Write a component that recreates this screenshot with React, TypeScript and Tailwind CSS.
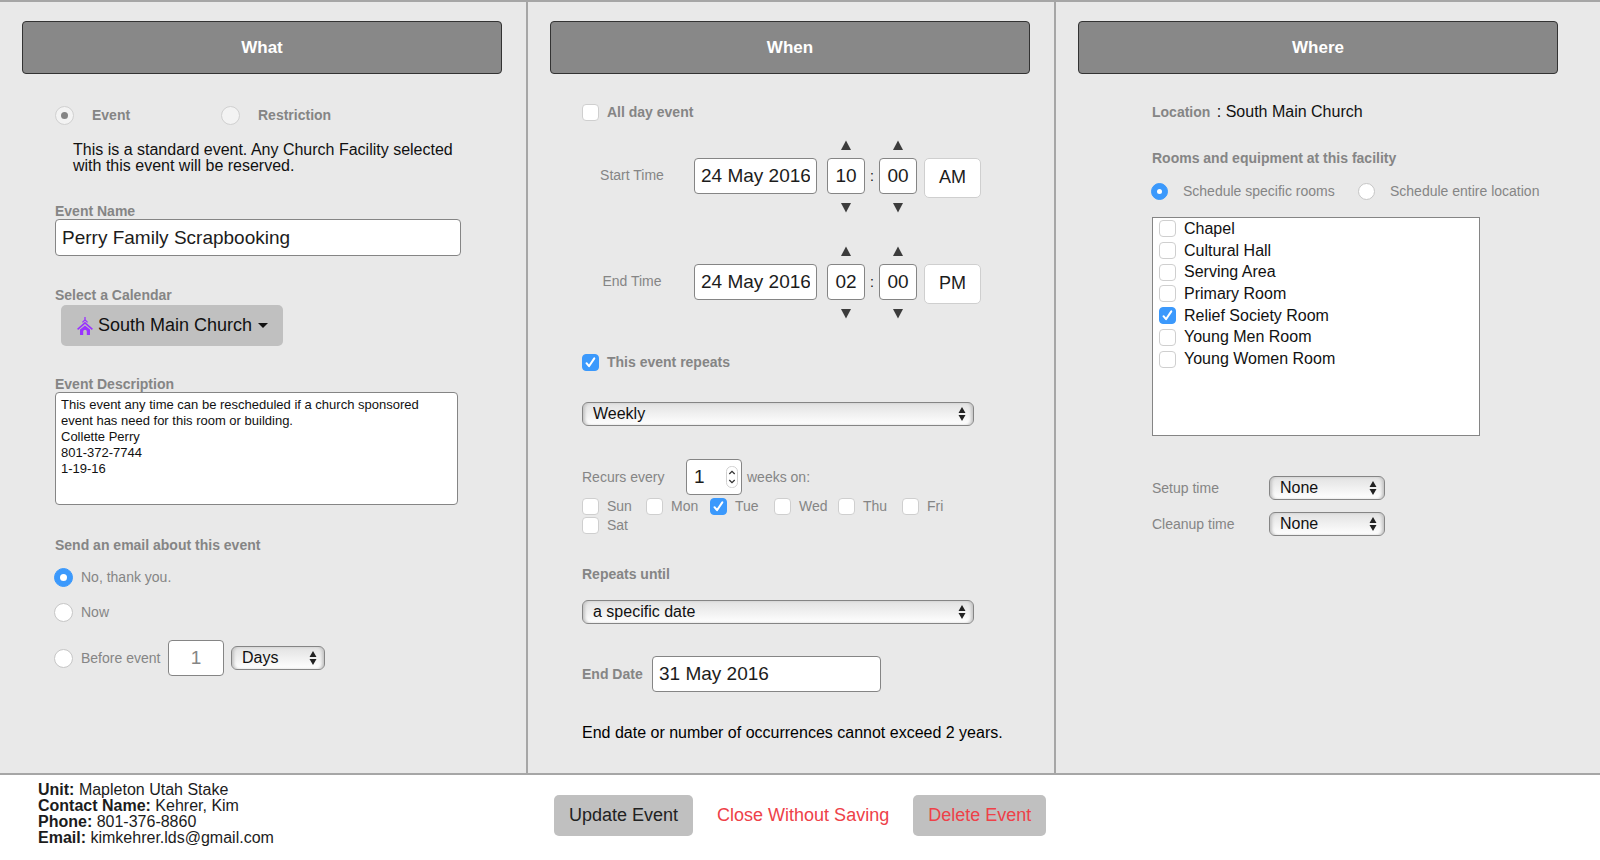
import React, { useState } from "react";

const days = ["Sun", "Mon", "Tue", "Wed", "Thu", "Fri", "Sat"];

const rooms = [
  "Chapel",
  "Cultural Hall",
  "Serving Area",
  "Primary Room",
  "Relief Society Room",
  "Young Men Room",
  "Young Women Room",
];

const contact = [
  ["Unit:", "Mapleton Utah Stake"],
  ["Contact Name:", "Kehrer, Kim"],
  ["Phone:", "801-376-8860"],
  ["Email:", "kimkehrer.lds@gmail.com"],
];

const field =
  "rounded-[4px] border border-[#858585] bg-white text-[19px] leading-6 text-[#1c1c1c] outline-none";

type CheckProps = {
  id: string;
  checked: boolean;
  onChange: () => void;
};

const Check = ({ id, checked, onChange }: CheckProps) => (
  <span className="grid shrink-0">
    <input
      id={id}
      type="checkbox"
      checked={checked}
      onChange={onChange}
      className="col-start-1 row-start-1 size-[17px] appearance-none rounded-[4px] border border-[#cfcfcf] bg-white checked:border-[#3b99fc] checked:bg-[#3b99fc]"
    />
    {checked && (
      <svg
        viewBox="0 0 17 17"
        className="pointer-events-none col-start-1 row-start-1 size-[17px]"
        fill="none"
        stroke="white"
        strokeWidth="2"
        strokeLinecap="round"
        strokeLinejoin="round"
      >
        <path d="M4.5 9.2 7 12.2 12.3 4.4" />
      </svg>
    )}
  </span>
);

type RadioProps = CheckProps & {
  name: string;
  small?: boolean;
  disabled?: boolean;
};

const Radio = ({ id, name, checked, onChange, small, disabled }: RadioProps) => (
  <span className="grid shrink-0 place-items-center">
    <input
      id={id}
      name={name}
      type="radio"
      checked={checked}
      onChange={onChange}
      disabled={disabled}
      className={`col-start-1 row-start-1 appearance-none rounded-full border border-[#c6c6c6] bg-white checked:border-[#3b99fc] checked:bg-[#3b99fc] disabled:border-[#d0d0d0] disabled:bg-[#f3f3f3] ${
        small ? "size-[17px]" : "size-[19px]"
      }`}
    />
    {checked && (
      <span
        className={`pointer-events-none col-start-1 row-start-1 rounded-full ${
          disabled ? "size-[7px] bg-[#858585]" : small ? "size-[5px] bg-white" : "size-[7px] bg-white"
        }`}
      />
    )}
  </span>
);

type PickerProps = {
  id: string;
  label?: string;
  options: string[];
  className: string;
};

const Picker = ({ id, label, options, className }: PickerProps) => (
  <span className={`grid items-center ${className}`}>
    <select
      id={id}
      aria-label={label}
      className="col-start-1 row-start-1 h-6 w-full appearance-none rounded-[6px] border border-[#858585] bg-linear-to-b from-[#e2e2e2] to-white pr-6 pl-[10px] text-[16px] leading-5 text-[#111] shadow-[inset_3px_0_3px_-1px_#c4c4c4,inset_-3px_0_3px_-1px_#c4c4c4] outline-none"
    >
      {options.map((option) => (
        <option key={option}>{option}</option>
      ))}
    </select>
    <svg
      viewBox="0 0 8 14"
      className="pointer-events-none col-start-1 row-start-1 mr-2 h-[14px] w-2 justify-self-end"
      fill="#222"
    >
      <path d="M4 0 7.5 6H.5zM4 14 .5 8h7z" />
    </svg>
  </span>
);

const Stepper = ({ label, initial }: { label: string; initial: number }) => {
  const [value, setValue] = useState(initial);

  return (
    <div className="flex w-[38px] flex-col items-center">
      <button
        type="button"
        aria-label={`${label} up`}
        onClick={() => setValue(value + 1)}
        className="flex h-[26px] items-center"
      >
        <svg viewBox="0 0 10 10" className="size-[10px]" fill="#3c3c3c">
          <path d="M5 .5 10 10H0z" />
        </svg>
      </button>
      <input
        type="text"
        aria-label={label}
        value={String(value).padStart(2, "0")}
        readOnly
        className={`h-9 w-full text-center ${field}`}
      />
      <button
        type="button"
        aria-label={`${label} down`}
        onClick={() => setValue(Math.max(0, value - 1))}
        className="flex h-[26px] items-center pt-[2px]"
      >
        <svg viewBox="0 0 10 10" className="size-[10px]" fill="#3c3c3c">
          <path d="M0 0h10L5 9.5z" />
        </svg>
      </button>
    </div>
  );
};

type TimeRowProps = {
  id: string;
  label: string;
  hour: number;
  half: string;
};

const TimeRow = ({ id, label, hour, half }: TimeRowProps) => (
  <div className="flex items-center">
    <label htmlFor={id} className="w-28 pr-3 pb-[2px] text-center">
      {label}
    </label>
    <input
      id={id}
      type="text"
      defaultValue="24 May 2016"
      className={`h-9 w-[123px] px-[6px] ${field}`}
    />
    <div className="ml-[10px] flex items-center">
      <Stepper label={`${label} hour`} initial={hour} />
      <span className="w-[14px] text-center text-[#111]">:</span>
      <Stepper label={`${label} minute`} initial={0} />
    </div>
    <button
      type="button"
      className="ml-[7px] mt-[3px] h-10 w-[57px] rounded-[5px] border border-[#cfcfcf] bg-white text-[18px] text-[#1c1c1c]"
    >
      {half}
    </button>
  </div>
);

const Panel = ({ title, last, children }: { title: string; last?: boolean; children: React.ReactNode }) => (
  <section
    className={`w-[33%] border-r-2 pr-6 pl-[22px] pt-[19px] ${
      last ? "border-transparent" : "border-[#a6a6a6]"
    }`}
  >
    <h2 className="flex h-[53px] items-center justify-center rounded-[4px] border border-[#333] bg-[#888] text-[17px] font-bold text-white">
      {title}
    </h2>
    {children}
  </section>
);

const ChurchIcon = () => (
  <svg viewBox="0 0 16 18" className="h-[18px] w-4" fill="none" stroke="#9a33ff">
    <path d="M8 0v3M5.4 5.4 8 2.8l2.6 2.6" strokeWidth="1.3" />
    <path d="M.6 12.4 8 5.9l7.4 6.5" strokeWidth="1.6" />
    <path d="M3 12.6 8 8.4l5 4.2V18H9.8v-3.4a1.8 1.8 0 0 0-3.6 0V18H3z" fill="#9a33ff" stroke="none" />
  </svg>
);

const What = () => {
  const [email, setEmail] = useState("none");

  return (
    <div className="pl-[33px]">
      <div className="mt-[31px] flex h-5 items-center font-bold">
        <Radio id="event" name="kind" checked onChange={() => {}} disabled />
        <label htmlFor="event" className="w-[147px] pl-[18px]">
          Event
        </label>
        <Radio id="restriction" name="kind" checked={false} onChange={() => {}} disabled />
        <label htmlFor="restriction" className="pl-[18px]">
          Restriction
        </label>
      </div>
      <p className="mt-[17px] w-[410px] pl-[18px] text-[16px] leading-4 text-[#111]">
        This is a standard event. Any Church Facility selected with this event will be reserved.
      </p>

      <label htmlFor="name" className="mt-[29px] block leading-4 font-bold">
        Event Name
      </label>
      <input
        id="name"
        type="text"
        defaultValue="Perry Family Scrapbooking"
        className={`block h-[37px] w-[406px] px-[6px] ${field}`}
      />

      <p className="mt-[31px] leading-4 font-bold">Select a Calendar</p>
      <button
        type="button"
        className="mt-[2px] ml-[6px] flex h-[41px] w-[222px] items-center rounded-[5px] bg-[#c0c0c0] pl-4 text-[18px] text-[#111]"
      >
        <ChurchIcon />
        <span className="ml-[5px]">South Main Church</span>
        <svg viewBox="0 0 10 5" className="ml-[6px] h-[5px] w-[10px]" fill="#111">
          <path d="M0 0h10L5 5z" />
        </svg>
      </button>

      <label htmlFor="description" className="mt-[30px] block leading-4 font-bold">
        Event Description
      </label>
      <textarea
        id="description"
        defaultValue={
          "This event any time can be rescheduled if a church sponsored event has need for this room or building.\nCollette Perry\n801-372-7744\n1-19-16"
        }
        className="block h-[113px] w-[403px] resize-none rounded-[4px] border border-[#858585] bg-white px-[5px] py-1 text-[13px] leading-4 text-[#111] outline-none"
      />

      <fieldset>
        <legend className="pt-8 leading-4 font-bold">Send an email about this event</legend>
        <div className="mt-[13px] -ml-px flex h-[22px] items-center">
          <Radio id="none" name="email" checked={email === "none"} onChange={() => setEmail("none")} />
          <label htmlFor="none" className="pl-2">
            No, thank you.
          </label>
        </div>
        <div className="mt-[13px] -ml-px flex h-[22px] items-center">
          <Radio id="now" name="email" checked={email === "now"} onChange={() => setEmail("now")} />
          <label htmlFor="now" className="pl-2">
            Now
          </label>
        </div>
        <div className="mt-[17px] -ml-px flex h-9 items-center">
          <Radio id="before" name="email" checked={email === "before"} onChange={() => setEmail("before")} />
          <label htmlFor="before" className="w-[95px] pl-2">
            Before event
          </label>
          <input
            type="text"
            aria-label="Amount"
            placeholder="1"
            className={`h-9 w-14 text-center placeholder:text-[#858585] ${field}`}
          />
          <Picker id="unit" label="Unit" options={["Days", "Hours"]} className="ml-[7px] w-[94px]" />
        </div>
      </fieldset>
    </div>
  );
};

const When = () => {
  const [allDay, setAllDay] = useState(false);
  const [repeats, setRepeats] = useState(true);
  const [picked, setPicked] = useState(["Tue"]);

  const toggleDay = (day: string) => {
    setPicked(picked.includes(day) ? picked.filter((d) => d !== day) : [...picked, day]);
  };

  return (
    <div className="pl-8">
      <div className="mt-[29px] flex h-[18px] items-center">
        <Check id="all-day" checked={allDay} onChange={() => setAllDay(!allDay)} />
        <label htmlFor="all-day" className="pl-2 font-bold">
          All day event
        </label>
      </div>

      <div className="mt-[11px] flex flex-col gap-[18px]">
        <TimeRow id="start" label="Start Time" hour={10} half="AM" />
        <TimeRow id="end" label="End Time" hour={2} half="PM" />
      </div>

      <div className="mt-[27px] flex h-[18px] items-center">
        <Check id="repeats" checked={repeats} onChange={() => setRepeats(!repeats)} />
        <label htmlFor="repeats" className="pl-2 font-bold">
          This event repeats
        </label>
      </div>
      <Picker
        id="frequency"
        label="Frequency"
        options={["Weekly", "Daily", "Monthly"]}
        className="mt-[31px] w-[392px]"
      />

      <div className="mt-[33px] flex h-9 items-center">
        <label htmlFor="interval" className="w-[104px]">
          Recurs every
        </label>
        <div className={`mr-[5px] flex h-9 w-14 items-center justify-between pr-[3px] pl-[7px] ${field}`}>
          <input id="interval" type="text" defaultValue="1" className="w-5 outline-none" />
          <svg viewBox="0 0 12 22" className="h-[22px] w-3" fill="none">
            <rect x=".5" y=".5" width="11" height="21" rx="5" stroke="#d0d0d0" />
            <path d="M3.3 8 6 5.4 8.7 8M3.3 14 6 16.6 8.7 14" stroke="#333" strokeWidth="1.3" />
          </svg>
        </div>
        <span>weeks on:</span>
      </div>
      <div className="mt-[3px] flex w-[400px] flex-wrap gap-y-[2px]">
        {days.map((day) => (
          <div key={day} className="flex w-16 items-center">
            <Check id={day} checked={picked.includes(day)} onChange={() => toggleDay(day)} />
            <label htmlFor={day} className="pl-2 leading-[17px]">
              {day}
            </label>
          </div>
        ))}
      </div>

      <label htmlFor="until" className="mt-8 block leading-4 font-bold">
        Repeats until
      </label>
      <Picker id="until" options={["a specific date", "a number of occurrences"]} className="mt-[18px] w-[392px]" />

      <div className="mt-8 flex items-center">
        <label htmlFor="end-date" className="w-[70px] font-bold">
          End Date
        </label>
        <input
          id="end-date"
          type="text"
          defaultValue="31 May 2016"
          className={`h-9 w-[229px] px-[6px] ${field}`}
        />
      </div>
      <p className="mt-[33px] text-[16px] leading-4 text-black">
        End date or number of occurrences cannot exceed 2 years.
      </p>
    </div>
  );
};

const Where = () => {
  const [scope, setScope] = useState("rooms");
  const [picked, setPicked] = useState(["Relief Society Room"]);

  const toggleRoom = (room: string) => {
    setPicked(picked.includes(room) ? picked.filter((r) => r !== room) : [...picked, room]);
  };

  return (
    <div className="pl-[74px]">
      <p className="mt-[30px] leading-4">
        <b>Location</b>
        <span className="pl-[2px] text-[16px] text-[#111]"> : South Main Church</span>
      </p>
      <p className="mt-[30px] leading-4 font-bold">Rooms and equipment at this facility</p>
      <div className="mt-4 -ml-px flex h-[18px] items-center whitespace-nowrap">
        <Radio id="some" name="scope" small checked={scope === "rooms"} onChange={() => setScope("rooms")} />
        <label htmlFor="some" className="w-[190px] pl-[15px]">
          Schedule specific rooms
        </label>
        <Radio id="entire" name="scope" small checked={scope === "all"} onChange={() => setScope("all")} />
        <label htmlFor="entire" className="pl-[15px]">
          Schedule entire location
        </label>
      </div>
      <div className="mt-[17px] h-[219px] w-[328px] border border-[#858585] bg-white pl-[6px] text-[16px] text-[#111]">
        <ul className="grid h-[152px] grid-rows-7">
          {rooms.map((room) => (
            <li key={room} className="flex items-center">
              <Check id={room} checked={picked.includes(room)} onChange={() => toggleRoom(room)} />
              <label htmlFor={room} className="pl-2 leading-5">
                {room}
              </label>
            </li>
          ))}
        </ul>
      </div>
      <div className="mt-10 flex items-center">
        <label htmlFor="setup" className="w-[117px]">
          Setup time
        </label>
        <Picker id="setup" options={["None", "15 min", "30 min"]} className="w-[116px]" />
      </div>
      <div className="mt-3 flex items-center">
        <label htmlFor="cleanup" className="w-[117px]">
          Cleanup time
        </label>
        <Picker id="cleanup" options={["None", "15 min", "30 min"]} className="w-[116px]" />
      </div>
    </div>
  );
};

const App = () => {
  return (
    <div className="min-h-screen bg-white font-['Liberation_Sans',Arial,sans-serif] text-[14px] text-[#858585]">
      <main className="flex min-h-[775px] border-y-2 border-[#a6a6a6] bg-[#e9e9e9]">
        <Panel title="What">
          <What />
        </Panel>
        <Panel title="When">
          <When />
        </Panel>
        <Panel title="Where" last>
          <Where />
        </Panel>
      </main>
      <footer className="flex items-start">
        <div className="w-[33%] pt-[7px] pl-[38px] text-[16px] leading-4 text-[#1c1c1c]">
          {contact.map(([label, value]) => (
            <p key={label}>
              <b>{label}</b> {value}
            </p>
          ))}
        </div>
        <div className="flex items-center gap-6 pt-5 pl-[26px] text-[18px]">
          <button type="button" className="h-[41px] rounded-[5px] bg-[#c0c0c0] px-[15px] text-[#222]">
            Update Event
          </button>
          <a href="#close" className="text-[#ee4148]">
            Close Without Saving
          </a>
          <button type="button" className="h-[41px] rounded-[5px] bg-[#c0c0c0] px-[15px] text-[#ee4148]">
            Delete Event
          </button>
        </div>
      </footer>
    </div>
  );
};

export default App;
